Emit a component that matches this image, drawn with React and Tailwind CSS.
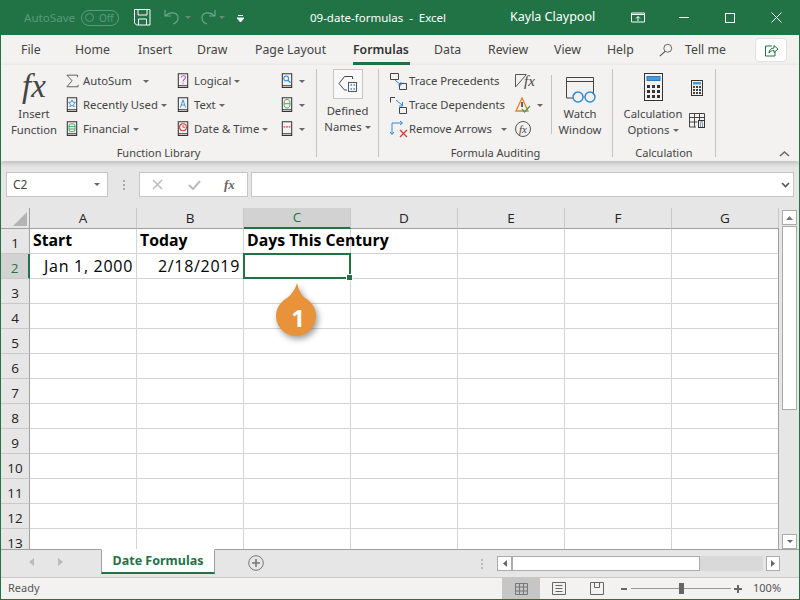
import { Fragment } from 'react'

function Caret({ className = '' }) {
  return (
    <svg width="6" height="3" viewBox="0 0 6 3" className={`shrink-0 ${className}`}>
      <path d="M0 0h6L3 3z" fill="#666" />
    </svg>
  )
}

function Book({ children }) {
  return (
    <svg width="12" height="16" viewBox="0 0 14 18" fill="none" className="shrink-0">
      <path d="M1.500.5h11v16h-11zM1.500 14.500h11" stroke="#333" strokeWidth="1.200" />
      {children}
    </svg>
  )
}

function FnRow({ icon, label, caretGap = 'ml-[3px]' }) {
  return (
    <div className="flex h-6 items-center">
      <span className="w-[17px] shrink-0">{icon}</span>
      {label && <span className="whitespace-nowrap text-[11.3px] text-[#444]">{label}</span>}
      <Caret className={caretGap} />
    </div>
  )
}

function Sep({ className = 'h-[88px]' }) {
  return <div className={`w-px shrink-0 bg-[#c2c2c2] ${className}`} />
}

function TitleBar() {
  return (
    <div className="flex h-[35px] shrink-0 items-center bg-[#217346] text-[13px] text-white">
      <span className="ml-6 w-[57px] text-[11.6px] text-[#5b9a7b]">AutoSave</span>
      <div className="flex h-[16px] w-[38px] items-center rounded-full border border-[#5b9a7b] pl-[3px]">
        <span className="h-[9px] w-[9px] rounded-full border border-[#5b9a7b]" />
        <span className="ml-[5px] text-[10px] leading-none text-[#5b9a7b]">Off</span>
      </div>
      <svg width="17" height="17" viewBox="0 0 17 17" fill="none" stroke="white" className="ml-[15px]">
        <path d="M.5.5h15.500v15.500H2.500L.5 14zM4 .5V6h9V.5M4.500 16v-6h8v6" />
      </svg>
      <svg width="18" height="17" viewBox="0 0 18 17" fill="none" stroke="#6ba58a" strokeWidth="1.200" className="ml-[13px]">
        <path d="M1 1v6h6M1.500 7C6 2 14 3 14 9c0 3-2 5-5 6" />
      </svg>
      <Caret className="ml-[3px] opacity-60 invert" />
      <svg width="18" height="17" viewBox="0 0 18 17" fill="none" stroke="#6ba58a" strokeWidth="1.200" className="ml-[7px]">
        <path d="M17 1v6h-6M16.500 7C12 2 4 3 4 9c0 3 2 5 5 6" />
      </svg>
      <Caret className="ml-[3px] opacity-60 invert" />
      <svg width="7" height="8" viewBox="0 0 7 8" className="ml-[12px] mt-[2px]">
        <path d="M1 .5h5M0 3h7L3.500 7z" stroke="white" strokeWidth="1" fill="white" />
      </svg>
      <span className="ml-[66px] w-[200px] whitespace-pre text-[11.5px]">09-date-formulas  -  Excel</span>
      <span className="w-[121px] whitespace-nowrap text-[12.5px]">Kayla Claypool</span>
      <svg width="14" height="11" viewBox="0 0 14 11" fill="none" stroke="white">
        <path d="M.5 1h13v9H.5zM.5 2.500h13M7 9V4.500M5 6.500l2-2 2 2" />
      </svg>
      <div className="ml-[34px] h-px w-[10px] bg-white" />
      <div className="ml-[36px] h-[10px] w-[10px] border border-white" />
      <svg width="11" height="11" viewBox="0 0 11 11" stroke="white" className="ml-[36px]">
        <path d="M.5.5l10 10M10.500.5l-10 10" />
      </svg>
    </div>
  )
}

function TabBar() {
  const tabs = [
    ['File', 'w-[74px] pl-[20px]'],
    ['Home', 'w-[63px]'],
    ['Insert', 'w-[59px]'],
    ['Draw', 'w-[58px]'],
    ['Page Layout', 'w-[98px]'],
  ]
  return (
    <div className="flex h-[30px] shrink-0 items-center bg-[#f3f2f1] text-[12.3px] text-[#444]">
      {tabs.map(([label, cls]) => (
        <span key={label} className={`${cls} whitespace-nowrap`}>{label}</span>
      ))}
      <div className="relative flex h-full w-[81px] shrink-0 items-center font-semibold text-[#333]">
        <span>Formulas</span>
        <div className="absolute bottom-0 left-0 h-[3px] w-[57px] bg-[#217346]" />
      </div>
      <span className="w-[54px]">Data</span>
      <span className="w-[66px]">Review</span>
      <span className="w-[53px]">View</span>
      <span className="w-[52px]">Help</span>
      <svg width="14" height="14" viewBox="0 0 16 16" fill="none" stroke="#555">
        <circle cx="10" cy="6" r="4.500" />
        <path d="M7 9.500L1 15" strokeWidth="1.300" />
      </svg>
      <span className="ml-[12px] w-[70px]">Tell me</span>
      <div className="flex h-[24px] w-[32px] items-center justify-center rounded-sm border border-[#e1e1e1] bg-white">
        <svg width="15" height="15" viewBox="0 0 15 15" fill="none" stroke="#217346">
          <path d="M8 3H1.500v10h9.500V8.500M5 10c0-3 2-5 5-5V2.500L14 6l-4 3.500V7.500C8 7.500 6 8 5 10z" />
        </svg>
      </div>
    </div>
  )
}

function GroupLabel({ children, className = '' }) {
  return <div className={`text-center text-[11px] leading-[12px] text-[#444] ${className}`}>{children}</div>
}

function FunctionLibrary() {
  return (
    <div className="flex w-[310px] shrink-0 flex-col">
      <div className="flex h-[78px]">
        <div className="mr-[4px] flex w-[56px] flex-col items-center text-[11.3px] leading-[16px] text-[#444]">
          <span className="h-[34px] font-['Liberation_Serif',serif] text-[33px] italic leading-[34px] text-[#444]">fx</span>
          <span className="mt-[3px]">Insert</span>
          <span>Function</span>
        </div>
        <div className="w-[111px]">
          <FnRow
            icon={<svg width="13" height="14" viewBox="0 0 14 14" fill="none" stroke="#555"><path d="M12.500 3V.7H1l5.500 6-5.500 6.500h12V11" /></svg>}
            label="AutoSum"
            caretGap="ml-[11px]"
          />
          <FnRow
            icon={<Book><path d="M7 3l1.200 2.800 2.800.2-2.200 2 .7 3L7 9.500 4.500 11l.7-3L3 6l2.800-.2z" stroke="#2e8ad8" /></Book>}
            label="Recently Used"
          />
          <FnRow
            icon={<Book><rect x="3.500" y="3" width="7" height="9" rx="2" stroke="#2e9e4f" /><path d="M3.500 6h7M3.500 9h7" stroke="#2e9e4f" /></Book>}
            label="Financial"
          />
        </div>
        <div className="w-[104px]">
          <FnRow
            icon={<Book><path d="M5 5c0-3 5-3 5 0 0 2-3 2-3 4.500M7 11v1.500" stroke="#b45cc8" strokeWidth="1.200" /></Book>}
            label="Logical"
          />
          <FnRow
            icon={<Book><path d="M4 12l3-9 3 9M5 9h4" stroke="#2e8ad8" /></Book>}
            label="Text"
          />
          <FnRow
            icon={<Book><circle cx="7" cy="7" r="4" stroke="#e0363a" strokeWidth="1.200" /><path d="M7 4.500V7h2.500" stroke="#e0363a" /></Book>}
            label="Date & Time"
          />
        </div>
        <div>
          <FnRow
            icon={<Book><circle cx="6" cy="6" r="2.800" stroke="#2e8ad8" strokeWidth="1.200" /><path d="M8 8l3 3" stroke="#2e8ad8" strokeWidth="1.400" /></Book>}
            caretGap="ml-px"
          />
          <FnRow
            icon={<Book><ellipse cx="7" cy="7.500" rx="3.500" ry="5" stroke="#2e9e4f" /><path d="M3.500 7.500h7" stroke="#2e9e4f" /></Book>}
            caretGap="ml-px"
          />
          <FnRow
            icon={<Book><path d="M3 6.500h2M6 6.500h2M9 6.500h2" stroke="#e0363a" strokeWidth="1.500" /></Book>}
            caretGap="ml-px"
          />
        </div>
      </div>
      <GroupLabel className="pr-[5px]">Function Library</GroupLabel>
    </div>
  )
}

function DefinedNames() {
  return (
    <div className="flex w-[61px] shrink-0 flex-col items-center text-[11.3px] leading-[16px] text-[#444]">
      <div className="flex h-[30px] w-[30px] items-center justify-center border border-[#c6c6c6] bg-[#f9f9f9]">
        <svg width="20" height="18" viewBox="0 0 20 18" fill="none" stroke="#444">
          <path d="M14.500 4V1.500H6.500L1 8.500l5.500 6.500H9" />
          <rect x="10.500" y="7.500" width="8" height="9" stroke="#555" />
          <path d="M12.500 10h1.500M15.500 10h1.500M12.500 14h1.500M15.500 14h1.500" stroke="#2e8ad8" strokeWidth="1.500" />
        </svg>
      </div>
      <span className="mt-[4px]">Defined</span>
      <span className="flex items-center">Names<Caret className="ml-[3px]" /></span>
    </div>
  )
}

function AuditRow({ icon, label, side, caret, labelCaret }) {
  return (
    <div className="flex h-6 items-center">
      <span className="flex w-[19px] shrink-0 justify-start">{icon}</span>
      <span className="flex w-[106px] items-center whitespace-nowrap text-[11.3px] text-[#444]">
        {label}
        {labelCaret && <Caret className="ml-[9px]" />}
      </span>
      {side}
      {caret && <Caret className="ml-[6px]" />}
    </div>
  )
}

function FormulaAuditing() {
  return (
    <div className="flex w-[233px] shrink-0 flex-col">
      <div className="flex h-[78px]">
        <div className="w-[172px] shrink-0 pl-[11px]">
          <AuditRow
            label="Trace Precedents"
            icon={
              <svg width="18" height="17" viewBox="0 0 18 17" fill="none">
                <path d="M.5.5h8v6h-8zM9.500 10.500h7v6h-7z" stroke="#444" />
                <path d="M5 7l6 5M8 12h3V9" stroke="#2e8ad8" />
              </svg>
            }
            side={
              <span className="flex items-center">
                <svg width="12" height="14" viewBox="0 0 12 14" fill="none" stroke="#555" className="shrink-0">
                  <path d="M.5 13V.5h11M.5 13L11 1" />
                </svg>
                <span className="-ml-[3px] font-['Liberation_Serif',serif] text-[15px] italic leading-none text-[#444]">fx</span>
              </span>
            }
          />
          <AuditRow
            label="Trace Dependents"
            icon={
              <svg width="18" height="17" viewBox="0 0 18 17" fill="none">
                <path d="M5 .5H.5v5M9.500 10.500h7v6h-7z" stroke="#444" />
                <path d="M6 3l6 5M9 9h3.500V5" stroke="#2e8ad8" />
              </svg>
            }
            side={
              <svg width="16" height="16" viewBox="0 0 16 16" fill="none" className="shrink-0">
                <path d="M7 1L1 14h12z" stroke="#e8832a" strokeWidth="1.300" />
                <path d="M7 5v5" stroke="#333" strokeWidth="1.500" />
                <path d="M7 12l2.500 3L15 9" stroke="#3da35d" strokeWidth="1.300" />
              </svg>
            }
            caret
          />
          <AuditRow
            label="Remove Arrows"
            labelCaret
            icon={
              <svg width="18" height="18" viewBox="0 0 18 18" fill="none">
                <path d="M2 14V3h10M10 1l2.500 2L10 5M0 12l2 2.500L4 12" stroke="#2e8ad8" />
                <path d="M10 10l7 7M17 10l-7 7" stroke="#e0363a" strokeWidth="1.300" />
              </svg>
            }
            side={
              <span className="flex h-4 w-4 items-center justify-center rounded-full border border-[#555] font-['Liberation_Serif',serif] text-[11px] italic leading-none text-[#444]">fx</span>
            }
          />
        </div>
        <Sep className="mt-[6px] h-[59px]" />
        <WatchWindow />
      </div>
      <GroupLabel>Formula Auditing</GroupLabel>
    </div>
  )
}

function WatchWindow() {
  return (
    <div className="flex w-[56px] shrink-0 flex-col items-center pt-[7px] text-[11.3px] leading-[16px] text-[#444]">
      <svg width="31" height="29" viewBox="0 0 31 29" fill="none" className="shrink-0">
        <path d="M1.500 22V1.500h27V17M1.500 5.500h27M1.500 22H8" stroke="#444" />
        <circle cx="13" cy="21" r="5" stroke="#2e8ad8" strokeWidth="1.400" />
        <circle cx="25" cy="21" r="5" stroke="#2e8ad8" strokeWidth="1.400" />
        <path d="M18 21h2M8 20l3-4M30 20l-3-4" stroke="#2e8ad8" strokeWidth="1.200" />
      </svg>
      <span className="mt-px">Watch</span>
      <span>Window</span>
    </div>
  )
}

function Calculation() {
  return (
    <div className="flex w-[102px] shrink-0 flex-col">
      <div className="flex h-[78px]">
        <div className="flex w-[80px] shrink-0 flex-col items-center pt-[4px] text-[11.3px] leading-[16px] text-[#444]">
          <svg width="19" height="28" viewBox="0 0 19 28" fill="none" className="shrink-0">
            <rect x=".5" y=".5" width="18" height="27" stroke="#333" />
            <rect x="3" y="3.500" width="13" height="4" fill="#4a9ad8" stroke="#2e7bbf" />
            <path d="M3 12h3v3H3zM8 12h3v3H8zM13 12h3v3h-3zM3 17h3v3H3zM8 17h3v3H8zM13 17h3v3h-3zM3 22h3v3H3zM8 22h3v3H8zM13 22h3v3h-3z" fill="#333" />
          </svg>
          <span className="mt-[5px] whitespace-nowrap">Calculation</span>
          <span className="flex items-center">Options<Caret className="ml-[3px]" /></span>
        </div>
        <div className="-ml-[4px] flex flex-col items-center pt-[11px]">
          <svg width="12" height="16" viewBox="0 0 12 16" fill="none" className="shrink-0">
            <rect x=".5" y=".5" width="11" height="15" stroke="#333" />
            <rect x="2" y="2" width="8" height="2.500" fill="#4a9ad8" />
            <path d="M2 6h2v2H2zM5 6h2v2H5zM8 6h2v2H8zM2 9h2v2H2zM5 9h2v2H5zM8 9h2v2H8zM2 12h2v2H2zM5 12h2v2H5zM8 12h2v2H8z" fill="#444" />
          </svg>
          <svg width="16" height="15" viewBox="0 0 16 15" fill="none" className="mt-[17px] shrink-0">
            <path d="M7 14H.5V.5h15V7M.5 4.500h15M.5 9h8M5.500.5V14M10.500.5V7" stroke="#444" />
            <rect x="9.500" y="7.500" width="6" height="7" stroke="#333" fill="#f3f2f1" />
            <path d="M11 9h3" stroke="#2e8ad8" />
            <path d="M11 11h1M13 11h1M11 13h1M13 13h1" stroke="#333" />
          </svg>
        </div>
      </div>
      <GroupLabel>Calculation</GroupLabel>
    </div>
  )
}

function Ribbon() {
  return (
    <div className="relative z-10 flex h-[96px] shrink-0 items-start bg-[#f3f2f1] pl-[5px] pt-[4px] shadow-[0_2px_5px_rgba(0,0,0,0.2)]">
      <FunctionLibrary />
      <Sep />
      <DefinedNames />
      <Sep />
      <FormulaAuditing />
      <Sep />
      <Calculation />
      <Sep />
      <svg width="11" height="6" viewBox="0 0 11 6" fill="none" stroke="#666" strokeWidth="1.500" className="ml-[63px] mt-[82px]">
        <path d="M1 5l4.500-4L10 5" />
      </svg>
    </div>
  )
}

function FormulaBar() {
  return (
    <div className="flex h-[47px] shrink-0 items-start bg-[#e6e6e6] pl-[5px] pt-[11px]">
      <div className="flex h-[25px] w-[102px] items-center justify-between border border-[#c6c6c6] bg-white pl-[6px] pr-[7px] text-[12px] text-[#444]">
        C2
        <Caret />
      </div>
      <div className="ml-[15px] flex h-[25px] w-[2px] flex-col items-center justify-center gap-[2px]">
        <span className="h-[2px] w-[2px] bg-[#aaa]" />
        <span className="h-[2px] w-[2px] bg-[#aaa]" />
        <span className="h-[2px] w-[2px] bg-[#aaa]" />
      </div>
      <div className="ml-[14px] flex h-[25px] w-[109px] items-center border border-[#c6c6c6] bg-white pl-[12px]">
        <svg width="11" height="11" viewBox="0 0 11 11" stroke="#bbb" strokeWidth="1.500">
          <path d="M1 1l9 9M10 1l-9 9" />
        </svg>
        <svg width="13" height="10" viewBox="0 0 13 10" fill="none" stroke="#bbb" strokeWidth="2" className="ml-[25px]">
          <path d="M1 5l4 4 7-8" />
        </svg>
        <span className="ml-[23px] font-['Liberation_Serif',serif] text-[13px] font-bold italic leading-none text-[#666]">fx</span>
      </div>
      <div className="ml-[3px] flex h-[25px] w-[543px] items-center justify-end border border-[#c6c6c6] bg-white pr-[3px]">
        <svg width="9" height="6" viewBox="0 0 9 6" fill="none" stroke="#555" strokeWidth="1.600">
          <path d="M1 1l3.500 3.500L8 1" />
        </svg>
      </div>
    </div>
  )
}

const columns = ['A', 'B', 'C', 'D', 'E', 'F', 'G']
const rows = Array.from({ length: 13 }, (_, i) => i + 1)

const cellText = {
  A1: 'Start',
  B1: 'Today',
  C1: 'Days This Century',
  A2: 'Jan 1, 2000',
  B2: '2/18/2019',
}

function Sheet() {
  return (
    <div className="relative min-h-0 flex-1 overflow-hidden">
      <div className="grid grid-cols-[29px_repeat(7,107px)] grid-rows-[21px_repeat(13,25px)] bg-white font-['Open_Sans',sans-serif] text-[16px] text-black">
        <div className="flex items-end justify-end border-r border-b border-[#a0a0a0] bg-[#e6e6e6] p-[2px]">
          <svg width="14" height="14" viewBox="0 0 14 14"><path d="M14 0v14H0z" fill="#b4b4b4" /></svg>
        </div>
        {columns.map(col => (
          <div
            key={col}
            className={
              col === 'C'
                ? 'flex items-center justify-center border-b-2 border-[#217346] border-r border-r-[#c8c8c8] bg-[#d2d2d2] text-[13.5px] text-[#217346]'
                : 'flex items-center justify-center border-r border-b border-r-[#c8c8c8] border-b-[#a0a0a0] bg-[#e6e6e6] text-[13.5px] text-[#222]'
            }
          >
            {col}
          </div>
        ))}
        {rows.map(row => (
          <Fragment key={row}>
            <div
              className={
                row === 2
                  ? 'flex items-center justify-center border-r-2 border-b border-r-[#217346] border-b-[#c8c8c8] bg-[#d2d2d2] pt-[5px] text-[13.5px] leading-[9px] text-[#217346]'
                  : 'flex items-center justify-center border-r border-b border-r-[#a0a0a0] border-b-[#c8c8c8] bg-[#e6e6e6] pt-[5px] text-[13.5px] leading-[9px] text-[#222]'
              }
            >
              {row}
            </div>
            {columns.map(col => {
              const text = cellText[col + row]
              const selected = col === 'C' && row === 2
              return (
                <div
                  key={col}
                  className={`relative flex items-center whitespace-nowrap border-r border-b border-[#d4d4d4] px-[3px] ${row === 1 ? 'text-[15.8px] font-bold' : ''} ${row === 2 ? 'justify-end tracking-[0.7px]' : ''}`}
                >
                  {text}
                  {selected && (
                    <div className="absolute -left-px -top-px z-10 h-[26px] w-[108px] border-2 border-[#217346]">
                      <span className="absolute -bottom-[4px] -right-[4px] h-[7px] w-[7px] border border-white bg-[#217346]" />
                    </div>
                  )}
                </div>
              )
            })}
          </Fragment>
        ))}
      </div>
      {/* grid edge */}
      <div className="absolute bottom-0 left-[777px] top-[20px] w-[1px] bg-[#a0a0a0]" />
      {/* callout */}
      <svg width="52" height="60" viewBox="0 0 52 60" className="absolute left-[270px] top-[75px] z-20 overflow-visible drop-shadow-[2px_3px_3px_rgba(0,0,0,0.4)]">
        <path d="M26 0c2 7 4 12 8 15a20 20 0 1 1-18 0c4-3 8-8 10-15z" fill="#e8923c" />
      </svg>
      <span className="absolute left-[278px] top-[94px] z-20 w-[38px] text-center font-['Open_Sans',sans-serif] text-[24px] font-bold leading-[32px] text-white">1</span>
      {/* vertical scrollbar */}
      <div className="absolute bottom-0 left-[778px] top-0 flex w-[21px] flex-col items-center bg-[#e6e6e6] pt-[2px]">
        <div className="flex h-[15px] w-[15px] items-center justify-center border border-[#ababab] bg-white">
          <svg width="7" height="4" viewBox="0 0 7 4"><path d="M0 4h7L3.500 0z" fill="#777" /></svg>
        </div>
        <div className="mt-px h-[184px] w-[15px] border border-[#ababab] bg-white" />
        <div className="mt-auto flex h-[15px] w-[15px] items-center justify-center border border-[#ababab] bg-white">
          <Caret />
        </div>
      </div>
    </div>
  )
}

function SheetTabs() {
  return (
    <div className="flex h-[28px] shrink-0 items-start border-t border-[#a0a0a0] bg-[#e6e6e6]">
      <div className="flex w-[100px] items-center pl-[28px] pt-[8px]">
        <svg width="5" height="8" viewBox="0 0 5 8"><path d="M5 0v8L0 4z" fill="#bbb" /></svg>
        <svg width="5" height="8" viewBox="0 0 5 8" className="ml-[24px]"><path d="M0 0v8l5-4z" fill="#bbb" /></svg>
      </div>
      <div className="-mt-px flex h-[25px] w-[114px] items-center justify-center border-x border-t border-x-[#a0a0a0] border-t-white border-b-2 border-b-[#217346] bg-white text-[12.5px] font-bold text-[#217346]">
        Date Formulas
      </div>
      <svg width="16" height="16" viewBox="0 0 16 16" fill="none" stroke="#777" className="ml-[33px] mt-[5px]">
        <circle cx="8" cy="8" r="7.300" />
        <path d="M8 4v8M4 8h8" strokeWidth="1.600" />
      </svg>
      <div className="ml-auto flex items-center pr-[19px] pt-[6px]">
        <div className="mr-[14px] flex flex-col gap-[2px]">
          <span className="h-[2px] w-[2px] bg-[#bbb]" />
          <span className="h-[2px] w-[2px] bg-[#bbb]" />
          <span className="h-[2px] w-[2px] bg-[#bbb]" />
        </div>
        <div className="flex h-[15px] w-[15px] items-center justify-center border border-[#ababab] bg-white">
          <svg width="4" height="7" viewBox="0 0 4 7"><path d="M4 0v7L0 3.500z" fill="#666" /></svg>
        </div>
        <div className="h-[15px] w-[188px] border border-[#ababab] bg-white" />
        <div className="h-[15px] w-[63px] bg-[#d9d9d9]" />
        <div className="ml-[3px] flex h-[15px] w-[14px] items-center justify-center border border-[#ababab] bg-white">
          <svg width="4" height="7" viewBox="0 0 4 7"><path d="M0 0v7l4-3.500z" fill="#666" /></svg>
        </div>
      </div>
    </div>
  )
}

function StatusBar() {
  return (
    <div className="flex h-[22px] shrink-0 items-center border-t border-[#c8c8c8] bg-[#f3f2f1] text-[11px] text-[#555]">
      <span className="ml-[7px] w-[494px]">Ready</span>
      <div className="flex h-full w-[38px] items-center justify-center bg-[#c6c6c6]">
        <svg width="13" height="12" viewBox="0 0 13 12" fill="none" stroke="#777">
          <path d="M.5.500h12v11H.5zM.5 4h12M.5 8h12M4.500.5v11M8.500.5v11" />
        </svg>
      </div>
      <svg width="14" height="13" viewBox="0 0 14 13" fill="none" stroke="#666" className="ml-[12px]">
        <path d="M.5.500h13v12H.5zM3.500 3.500h7M3.500 6.500h7M3.500 9.500h7" />
      </svg>
      <svg width="14" height="13" viewBox="0 0 14 13" fill="none" stroke="#666" className="ml-[24px]">
        <path d="M.5.500h13v12H.5zM4.500.5v5h5v-5" />
      </svg>
      <div className="ml-[17px] h-[2px] w-[6px] bg-[#666]" />
      <div className="relative ml-[4px] h-px w-[100px] bg-[#999]">
        <div className="absolute left-[48px] top-[-5px] h-[11px] w-[5px] bg-[#666]" />
      </div>
      <svg width="8" height="8" viewBox="0 0 8 8" stroke="#666" strokeWidth="2" className="ml-[3px]">
        <path d="M4 0v8M0 4h8" />
      </svg>
      <span className="ml-[11px]">100%</span>
    </div>
  )
}

export default function App() {
  return (
    <div className='flex h-[600px] w-[800px] flex-col overflow-hidden border-x border-b border-[#217346] bg-[#e6e6e6] font-["Noto_Sans",sans-serif]'>
      <div className="-mx-px flex flex-col">
        <TitleBar />
      </div>
      <TabBar />
      <Ribbon />
      <FormulaBar />
      <Sheet />
      <SheetTabs />
      <StatusBar />
    </div>
  )
}
